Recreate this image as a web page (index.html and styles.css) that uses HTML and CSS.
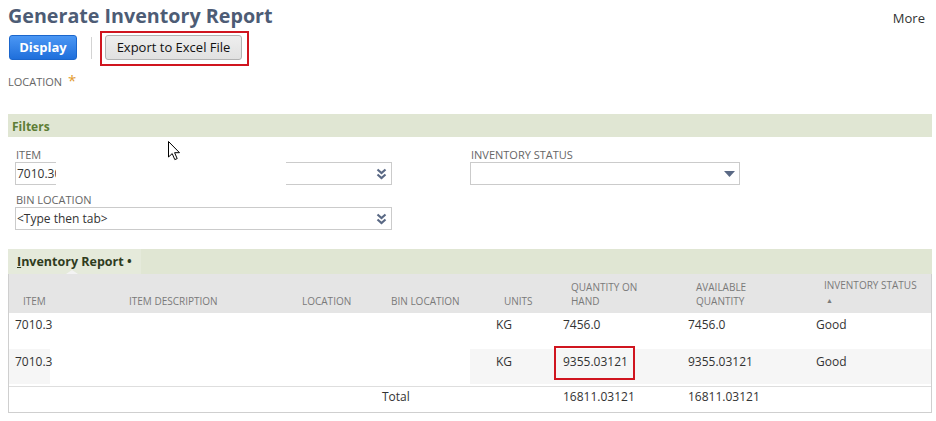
FILE: index.html
```html
<!DOCTYPE html>
<html lang="en">
<head>
<meta charset="utf-8">
<title>Generate Inventory Report</title>
<link rel="stylesheet" href="styles.css">
</head>
<body>
<div class="page">
  <header class="top">
    <h1 class="title">Generate Inventory Report</h1>
    <span class="more">More</span>
  </header>

  <div class="actions">
    <button class="btn btn-primary">Display</button>
    <span class="divider"></span>
    <span class="highlight"><button class="btn btn-secondary">Export to Excel File</button></span>
  </div>

  <div class="field-label loc-label">LOCATION <span class="req">*</span></div>

  <section class="filters">
    <div class="section-bar"><span class="section-title">Filters</span></div>
    <div class="filter-grid">
      <div class="field">
        <label class="field-label">ITEM</label>
        <div class="input">
          <span class="input-text">7010.30</span>
          <span class="redact"></span>
          <svg class="icon" width="11" height="12" viewBox="0 0 11 12"><path d="M1.5 1.5 L5.5 5 L9.5 1.5 M1.5 6.5 L5.5 10 L9.5 6.5" fill="none" stroke="#5a6985" stroke-width="2.2"/></svg>
        </div>
      </div>
      <div class="field">
        <label class="field-label">INVENTORY STATUS</label>
        <div class="input">
          <span class="input-text"></span>
          <svg class="icon" width="11" height="6" viewBox="0 0 11 6"><path d="M0 0 H11 L5.5 6 Z" fill="#5a6985"/></svg>
        </div>
      </div>
      <div class="field">
        <label class="field-label">BIN LOCATION</label>
        <div class="input">
          <span class="input-text">&lt;Type then tab&gt;</span>
          <svg class="icon" width="11" height="12" viewBox="0 0 11 12"><path d="M1.5 1.5 L5.5 5 L9.5 1.5 M1.5 6.5 L5.5 10 L9.5 6.5" fill="none" stroke="#5a6985" stroke-width="2.2"/></svg>
        </div>
      </div>
    </div>
  </section>

  <section class="report">
    <div class="tab-bar"><span class="tab"><u>I</u>nventory Report •</span></div>
    <div class="grid">
      <div class="row head">
        <div>ITEM</div>
        <div>ITEM DESCRIPTION</div>
        <div>LOCATION</div>
        <div>BIN LOCATION</div>
        <div>UNITS</div>
        <div>QUANTITY ON<br>HAND</div>
        <div>AVAILABLE<br>QUANTITY</div>
        <div>INVENTORY STATUS<br><span class="sort">▲</span></div>
      </div>
      <div class="row body-row r1">
        <div>7010.3</div>
        <div></div>
        <div></div>
        <div></div>
        <div>KG</div>
        <div>7456.0</div>
        <div>7456.0</div>
        <div>Good</div>
      </div>
      <div class="row body-row r2">
        <div class="cut-left">7010.3</div>
        <div class="blank"></div>
        <div class="blank"></div>
        <div class="cut-right"></div>
        <div>KG</div>
        <div><span class="mark">9355.03121</span></div>
        <div>9355.03121</div>
        <div>Good</div>
      </div>
      <div class="row body-row total">
        <div></div>
        <div></div>
        <div></div>
        <div class="total-label">Total</div>
        <div></div>
        <div>16811.03121</div>
        <div>16811.03121</div>
        <div></div>
      </div>
    </div>
  </section>

  <svg class="cursor" width="13" height="20" viewBox="0 0 13 20"><path d="M0.5 0.5 V16 L4.2 12.6 L6.8 18.6 L9.2 17.6 L6.6 11.7 H11.5 Z" fill="#fff" stroke="#000" stroke-width="1"/></svg>
</div>
</body>
</html>
```

FILE: styles.css
```css
* { box-sizing: border-box; }
html, body { margin: 0; }
body {
  background: #fff;
  font-family: "Open Sans", "Liberation Sans", sans-serif;
  color: #333;
  padding: 4px 4px 0 8px;
}
.page { position: relative; }

.top { display: flex; justify-content: space-between; align-items: flex-start; }
.title { margin: 0; font-size: 19.7px; line-height: 24px; font-weight: 700; color: #4d5c75; }
.more { margin-top: 6px; margin-right: 7px; font-size: 13px; line-height: 16px; color: #333; }

.actions { display: flex; align-items: center; margin-top: 7px; height: 25px; }
.btn {
  font-family: inherit; font-size: 13px; height: 25px; border-radius: 3px;
  padding: 0; line-height: 23px;
}
.btn-primary {
  margin-left: 1px; width: 68px;
  background: linear-gradient(#4b97f4, #1f6fdb);
  border: 1px solid #1b66cc; color: #fff; font-weight: 700;
}
.divider { width: 1px; height: 22px; background: #d3d3d3; margin: 0 13px 0 14px; }
.highlight { position: relative; display: flex; }
.highlight::after {
  content: ""; position: absolute; inset: -4px -7px -6px -5px;
  border: 2px solid #d0151f;
}
.btn-secondary {
  width: 137px; background: linear-gradient(#eeeeee, #e1e1e1);
  border: 1px solid #b2b2b2; color: #111; font-weight: 500;
}

.field-label { display: block; font-size: 11px; line-height: 14px; color: #666; text-transform: uppercase; }
.loc-label { margin-top: 15px; }
.req { color: #e29a2c; font-size: 15px; line-height: 0; margin-left: 3px; }

.filters { margin-top: 25px; }
.section-bar { background: #e0e6d3; height: 23px; }
.section-title { font-size: 12px; font-weight: 700; line-height: 23px; color: #5d7d35; padding-left: 4px; }
.filter-grid {
  display: grid; grid-template-columns: 377px 270px;
  column-gap: 78px; row-gap: 8px; padding: 11px 0 0 7px;
}
.field .field-label { margin-left: 1px; }
.input {
  position: relative; height: 23px; border: 1px solid #cbcbcb;
  display: flex; align-items: center; padding: 0 4px 0 1px;
  font-size: 12px; color: #333; background: #fff;
}
.input-text { flex: 1; white-space: nowrap; overflow: hidden; }
.redact { position: absolute; left: 40px; width: 230px; top: -2px; bottom: -2px; background: #fff; }
.icon { flex: none; }

.report { margin-top: 19px; }
.tab-bar { height: 25px; background: #e0e6d3; display: flex; }
.tab {
  position: relative; padding: 0 9px; background: #e5eadb;
  font-size: 12.5px; font-weight: 700; line-height: 25px; color: #2f3c1e;
}
.tab::after {
  content: ""; position: absolute; left: 58px; bottom: 0;
  border-left: 6px solid transparent; border-right: 6px solid transparent;
  border-bottom: 4px solid #f3f3f3;
}
.grid { border: 1px solid #cfcfcf; border-top: 0; box-shadow: 0 1px 0 #ececec; }
.row { display: grid; grid-template-columns: 106px 173px 89px 113px 67px 125px 128px 121px; }
.head {
  height: 39px; background: #e5e5e5; align-items: end;
  font-size: 10px; line-height: 14px; color: #7a7a7a; padding-bottom: 5px;
}
.head > div { padding-left: 14px; }
.sort { font-size: 7px; padding-left: 2px; }
.body-row { font-size: 12px; line-height: 16px; color: #333; }
.body-row > div { padding: 4px 0 0 6px; }
.r1 { height: 36px; }
.r2 { height: 37px; background: #f6f6f6; border-bottom: 2px solid #fff; }
.r2 > div { padding-top: 5px; }
.r2 .blank { background: #fff; }
.r2 .cut-left { background: linear-gradient(90deg, #f6f6f6 41px, #fff 41px); }
.r2 .cut-right { background: linear-gradient(90deg, #fff 93px, #f6f6f6 93px); }
.mark { position: relative; }
.mark::after {
  content: ""; position: absolute; inset: -7px -7px -10px -9px;
  border: 2px solid #d0151f;
}
.total { height: 26px; border-top: 1px solid #dedede; }
.total > div { padding-top: 2px; }
.total .total-label { padding-left: 5px; }

.cursor { position: absolute; left: 160px; top: 137px; }
```
